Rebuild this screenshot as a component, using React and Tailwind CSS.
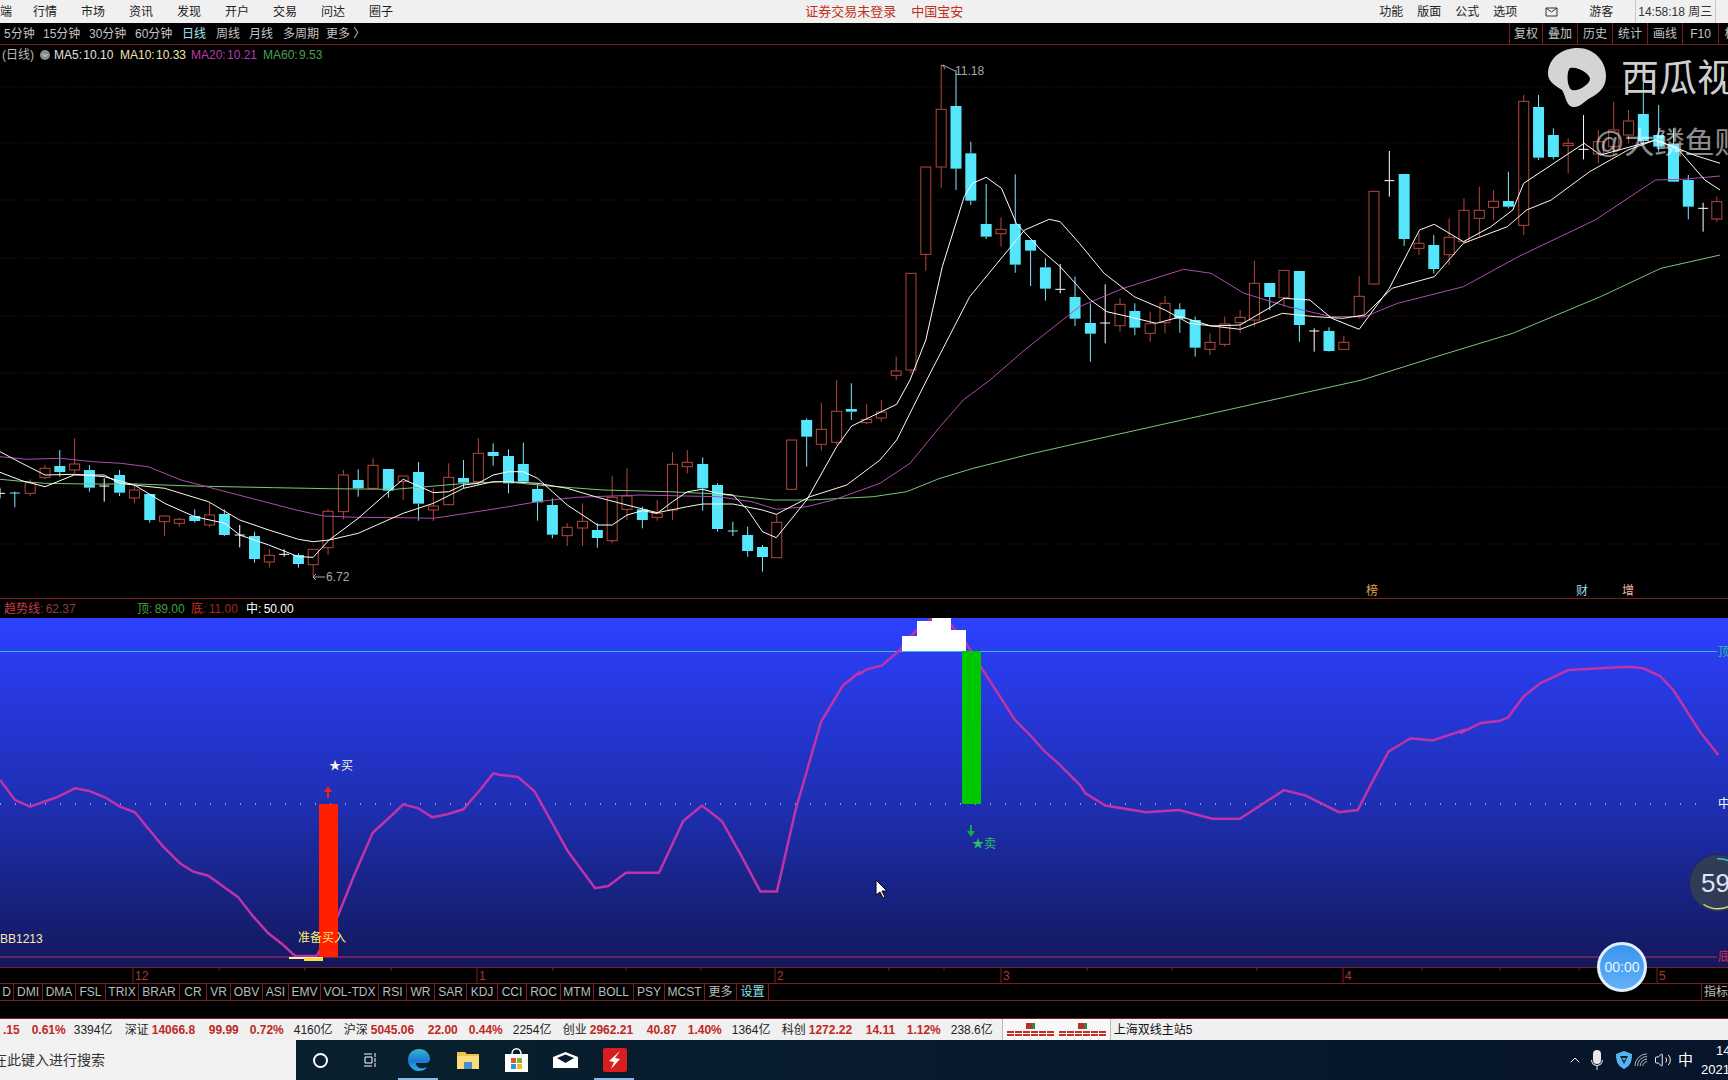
import React from 'react'
import { ChevronUp, Volume2 } from 'lucide-react'

// points were read off three different crops of the chart, each with its own scale
const z5 = ([x, y]) => [x / 1.823, 420 + y / 3]
const z6 = ([x, y]) => [860 + x / 1.823, 40 + y / 3]
const z10 = ([x, y]) => [700 + x / 3, 380 + y / 3]
const z7 = ([x, y]) => [x / 3, 590 + y / 3]
const z8 = ([x, y]) => [1500 + x / 3, 590 + y / 3]
const z9 = ([x, y]) => [860 + x / 3, 600 + y / 3]
const full = ([x, y]) => [x * 1.102, y * 1.102]
const toPoints = (pts) => pts.map(([x, y]) => `${x.toFixed(1)},${y.toFixed(1)}`).join(' ')

// [x, top, bottom, high, low, kind] r = hollow red, c = cyan, w = doji
const leftCandles = [
  [0, 220, 220, 205, 235, 'w'], [27, 219, 219, 215, 262, 'c'], [55, 188, 220, 178, 228, 'r'], [82, 145, 172, 135, 178, 'r'],
  [109, 138, 156, 90, 170, 'c'], [136, 132, 150, 55, 160, 'r'], [163, 150, 203, 135, 215, 'c'], [190, 198, 198, 175, 245, 'w'],
  [218, 165, 218, 150, 228, 'c'], [245, 210, 234, 195, 250, 'r'], [273, 222, 300, 222, 308, 'c'], [300, 288, 305, 288, 348, 'r'],
  [327, 298, 310, 293, 320, 'r'], [355, 288, 303, 268, 308, 'c'], [382, 285, 315, 245, 320, 'r'], [409, 282, 345, 268, 348, 'c'],
  [437, 345, 345, 315, 382, 'w'], [464, 348, 417, 335, 428, 'c'], [491, 406, 426, 388, 443, 'r'], [518, 403, 403, 388, 410, 'w'],
  [544, 405, 432, 400, 443, 'c'], [571, 388, 434, 388, 470, 'r'], [598, 274, 383, 268, 405, 'r'], [626, 165, 275, 150, 298, 'r'],
  [653, 180, 205, 148, 230, 'c'], [680, 136, 205, 115, 210, 'r'], [708, 147, 212, 147, 233, 'c'], [735, 168, 185, 168, 240, 'r'],
  [763, 156, 251, 126, 302, 'c'], [790, 258, 270, 205, 303, 'r'], [818, 172, 254, 130, 254, 'r'], [845, 174, 188, 120, 205, 'c'],
  [872, 100, 185, 55, 195, 'r'], [899, 96, 108, 70, 137, 'c'], [927, 108, 190, 88, 220, 'c'], [954, 132, 185, 68, 185, 'c'],
  [980, 207, 247, 190, 302, 'c'], [1007, 255, 344, 235, 355, 'c'], [1034, 322, 347, 310, 378, 'r'], [1062, 304, 324, 250, 378, 'r'],
  [1089, 330, 354, 310, 383, 'c'], [1116, 232, 362, 168, 370, 'r'], [1143, 228, 268, 145, 300, 'r'], [1171, 268, 300, 260, 325, 'c'],
  [1198, 280, 292, 240, 302, 'r'], [1226, 133, 270, 97, 300, 'r'], [1253, 127, 140, 90, 160, 'r'], [1281, 132, 205, 112, 272, 'c'],
  [1308, 195, 327, 190, 335, 'c'], [1336, 333, 333, 305, 348, 'c'], [1363, 345, 393, 320, 410, 'c'], [1390, 381, 411, 375, 455, 'c'],
  [1416, 307, 413, 283, 413, 'r'],
]
const midCandles = [
  [275, 180, 328, 180, 328, 'r'], [320, 120, 170, 115, 260, 'c'], [364, 148, 193, 68, 212, 'r'], [410, 94, 187, 0, 195, 'r'],
  [454, 87, 95, 10, 120, 'c'], [500, 118, 128, 72, 132, 'r'], [544, 96, 114, 60, 125, 'r'],
]
const rightCandles = [
  [66, 993, 1006, 950, 1020, 'r'], [93, 700, 990, 700, 1000, 'r'], [120, 381, 643, 381, 692, 'r'], [148, 208, 381, 75, 443, 'r'],
  [175, 198, 386, 90, 450, 'c'], [202, 340, 482, 305, 495, 'c'], [230, 552, 590, 432, 597, 'c'], [257, 568, 581, 532, 620, 'r'],
  [283, 552, 674, 403, 698, 'c'], [311, 600, 632, 600, 738, 'c'], [338, 682, 746, 655, 782, 'c'], [365, 748, 748, 672, 760, 'w'],
  [392, 771, 836, 710, 858, 'c'], [420, 849, 881, 790, 965, 'c'], [447, 849, 849, 733, 910, 'w'], [474, 793, 857, 775, 875, 'r'],
  [501, 813, 863, 790, 885, 'c'], [529, 851, 880, 815, 905, 'r'], [556, 790, 848, 768, 880, 'r'], [583, 808, 836, 790, 878, 'c'],
  [611, 840, 923, 830, 950, 'c'], [638, 907, 928, 880, 945, 'r'], [665, 852, 913, 830, 920, 'r'], [693, 832, 848, 810, 880, 'r'],
  [719, 730, 840, 663, 860, 'r'], [747, 729, 771, 729, 810, 'c'], [773, 691, 773, 691, 800, 'r'], [801, 693, 855, 693, 905, 'c'],
  [828, 873, 873, 865, 935, 'w'], [855, 873, 933, 862, 935, 'c'], [882, 907, 928, 888, 930, 'r'], [910, 769, 830, 708, 835, 'r'],
  [937, 454, 732, 454, 735, 'r'], [965, 422, 422, 333, 470, 'w'], [992, 402, 597, 402, 618, 'c'], [1019, 610, 625, 580, 645, 'r'],
  [1046, 615, 687, 585, 700, 'c'], [1074, 592, 644, 535, 675, 'r'], [1101, 511, 605, 475, 610, 'r'], [1129, 511, 535, 440, 590, 'r'],
  [1155, 484, 502, 450, 540, 'r'], [1182, 483, 500, 395, 505, 'c'], [1210, 184, 556, 165, 585, 'r'], [1237, 201, 353, 165, 360, 'c'],
  [1264, 285, 351, 265, 358, 'c'], [1291, 310, 317, 295, 400, 'r'], [1319, 328, 328, 225, 358, 'w'], [1346, 305, 342, 270, 370, 'r'],
  [1374, 270, 320, 185, 345, 'r'], [1401, 243, 285, 210, 310, 'r'], [1428, 222, 303, 100, 310, 'c'], [1456, 285, 320, 195, 335, 'c'],
  [1483, 313, 425, 265, 425, 'c'], [1510, 420, 500, 405, 538, 'c'], [1537, 505, 505, 488, 575, 'w'], [1562, 485, 537, 470, 545, 'r'],
]

const candles = [
  ...leftCandles.map(([x, t, b, h, l, k]) => ({ x: z5([x, 0])[0], t: z5([0, t])[1], b: z5([0, b])[1], h: z5([0, h])[1], l: z5([0, l])[1], k })),
  ...midCandles.map(([x, t, b, h, l, k]) => ({ x: z10([x, 0])[0], t: z10([0, t])[1], b: z10([0, b])[1], h: z10([0, h])[1], l: z10([0, l])[1], k })),
  ...rightCandles.map(([x, t, b, h, l, k]) => ({ x: z6([x, 0])[0], t: z6([0, t])[1], b: z6([0, b])[1], h: z6([0, h])[1], l: z6([0, l])[1], k })),
]

const ma5 = [
  ...[[0, 157], [40, 182], [82, 200], [135, 165], [190, 165], [218, 190], [245, 195], [300, 250], [355, 290], [410, 310], [437, 345], [490, 375], [544, 410], [571, 412], [600, 360], [653, 295], [708, 215], [735, 178], [790, 218], [818, 215], [845, 195], [872, 190], [899, 165], [927, 155], [954, 155], [980, 175], [1007, 215], [1034, 255], [1062, 285], [1089, 315], [1116, 315], [1143, 285], [1171, 272], [1198, 280], [1226, 245], [1253, 215], [1281, 208], [1308, 220], [1336, 225], [1363, 270], [1390, 335]].map(z5),
  ...[[229, 473], [320, 360], [410, 200], [455, 138], [590, 73], [630, 0]].map(z10),
  ...[[120, 900], [150, 680], [190, 470], [205, 430], [230, 412], [258, 445], [285, 550], [330, 630], [365, 680], [420, 780], [450, 815], [490, 830], [540, 850], [585, 830], [640, 858], [693, 855], [750, 800], [773, 775], [820, 780], [860, 835], [910, 868], [965, 745], [1020, 570], [1047, 553], [1100, 605], [1150, 560], [1190, 510], [1210, 430], [1320, 310], [1350, 345], [1450, 300], [1490, 325], [1540, 420], [1568, 450]].map(z6),
]
const ma10 = [
  ...[[0, 95], [40, 130], [82, 165], [136, 163], [190, 170], [245, 195], [300, 205], [380, 245], [437, 300], [490, 330], [544, 358], [571, 365], [600, 360], [653, 340], [680, 320], [735, 280], [790, 250], [845, 205], [899, 185], [927, 185], [980, 190], [1034, 205], [1089, 232], [1143, 255], [1198, 278], [1253, 260], [1281, 252], [1336, 252], [1390, 270]].map(z5),
  ...[[229, 403], [330, 350], [440, 315], [540, 240], [590, 180], [640, 80], [680, 0]].map(z10),
  ...[[200, 770], [300, 570], [345, 538], [365, 545], [400, 610], [445, 700], [500, 770], [556, 810], [600, 850], [693, 868], [770, 820], [830, 830], [880, 835], [920, 825], [970, 745], [1047, 710], [1100, 610], [1180, 560], [1215, 510], [1260, 480], [1330, 395], [1400, 330], [1450, 300], [1490, 325], [1520, 345], [1568, 370]].map(z6),
]
const ma20 = [
  ...[[0, 110], [50, 118], [110, 115], [170, 125], [220, 130], [270, 140], [330, 180], [400, 210], [470, 240], [540, 270], [590, 288], [650, 292], [735, 293], [790, 295], [850, 280], [920, 262], [980, 245], [1050, 232], [1115, 228], [1170, 225], [1250, 228], [1310, 230], [1370, 245]].map(z5),
  ...[[230, 388], [320, 380], [400, 360], [540, 310], [630, 250], [720, 140], [790, 60], [870, 0]].map(z10),
  ...[[300, 930], [400, 800], [480, 745], [590, 688], [640, 700], [700, 760], [780, 800], [860, 830], [920, 830], [980, 790], [1100, 740], [1200, 650], [1340, 540], [1450, 420], [1500, 418], [1568, 408]].map(z6),
]
const ma60 = [
  ...[[0, 178], [80, 190], [160, 192], [250, 192], [350, 198], [500, 203], [600, 206], [720, 208], [850, 190], [920, 185], [1000, 198], [1100, 210], [1220, 215], [1310, 222]].map(z5),
  ...[[220, 360], [330, 360], [520, 350], [620, 335], [720, 295], [820, 265], [1000, 220], [1200, 175]].map(z10),
  ...[[915, 1020], [1050, 950], [1190, 880], [1350, 770], [1460, 685], [1568, 645]].map(z6),
]

const trend = [
  ...[[0, 570], [45, 630], [90, 650], [170, 622], [225, 595], [265, 602], [315, 622], [360, 650], [405, 667], [440, 710], [490, 770], [540, 820], [580, 845], [625, 857], [715, 922], [760, 980], [805, 1030], [850, 1065], [885, 1098], [950, 1098], [1015, 975], [1065, 850], [1118, 728], [1160, 690], [1210, 643], [1255, 655], [1297, 682], [1345, 672], [1390, 658], [1440, 600], [1480, 550]].map(z7),
  ...[[453, 703], [470, 705], [485, 718], [515, 772], [540, 806], [552, 804], [568, 792], [598, 792], [620, 745], [637, 731], [655, 745], [672, 775], [690, 809], [705, 809], [722, 735], [745, 655], [765, 622], [780, 610]].map(full),
  ...[[0, 222], [20, 208], [65, 197], [120, 150], [165, 95], [215, 55], [250, 55], [273, 75], [318, 130], [362, 200], [465, 360], [510, 405], [555, 455], [595, 490], [660, 555]].map(z9),
  ...[[985, 720], [1003, 731], [1040, 737], [1070, 735], [1100, 743], [1125, 743], [1145, 730], [1165, 717], [1185, 722], [1215, 737], [1232, 735], [1245, 710], [1260, 682], [1280, 670], [1300, 672], [1330, 662]].map(full),
  ...[[-120, 430], [-60, 400], [0, 392], [25, 382], [70, 320], [120, 280], [205, 240], [300, 235], [385, 230], [430, 235], [480, 258], [520, 300], [600, 425], [655, 495]].map(z8),
]

const menuLeft = ['行情', '市场', '资讯', '发现', '开户', '交易', '问达', '圈子']
const periods = [
  ['5分钟', 'w-[43px] pl-[4px]'], ['15分钟', 'w-[46px]'], ['30分钟', 'w-[46px]'], ['60分钟', 'w-[47px]'],
  ['日线', 'w-[34px] text-[#a8e4f0]'], ['周线', 'w-[33px]'], ['月线', 'w-[34px]'], ['多周期', 'w-[43px]'], ['更多 〉', 'w-[44px]'],
]
const tools = [
  ['复权', 'w-[33px]'], ['叠加', 'w-[35px]'], ['历史', 'w-[35px]'], ['统计', 'w-[35px]'],
  ['画线', 'w-[35px]'], ['F10', 'w-[36px]'], ['板块', 'w-[36px]'],
]
const tabs = [
  ['D', 'w-[14px]'], ['DMI', 'w-[29px]'], ['DMA', 'w-[33px]'], ['FSL', 'w-[30px]'], ['TRIX', 'w-[33px]'], ['BRAR', 'w-[41px]'],
  ['CR', 'w-[27px]'], ['VR', 'w-[24px]'], ['OBV', 'w-[32px]'], ['ASI', 'w-[26px]'], ['EMV', 'w-[32px]'], ['VOL-TDX', 'w-[58px]'],
  ['RSI', 'w-[28px]'], ['WR', 'w-[28px]'], ['SAR', 'w-[32px]'], ['KDJ', 'w-[31px]'], ['CCI', 'w-[29px]'], ['ROC', 'w-[34px]'],
  ['MTM', 'w-[33px]'], ['BOLL', 'w-[40px]'], ['PSY', 'w-[31px]'], ['MCST', 'w-[40px]'], ['更多', 'w-[32px]'], ['设置', 'w-[32px] text-[#8fe0ec]'],
]
const indexes = [
  { name: '深证', price: '14066.8', diff: '99.99', pct: '0.72%', vol: '4160亿' },
  { name: '沪深', price: '5045.06', diff: '22.00', pct: '0.44%', vol: '2254亿' },
  { name: '创业', price: '2962.21', diff: '40.87', pct: '1.40%', vol: '1364亿' },
  { name: '科创', price: '1272.22', diff: '14.11', pct: '1.12%', vol: '238.6亿' },
]
const gridLines = [87, 143, 200, 258, 316, 373, 429, 487, 544]
const axisTicks = [219, 305, 391, 553, 626, 701, 889, 944, 1087, 1172, 1257, 1422, 1500, 1579]
const axisLabels = [['12', 133], ['1', 477], ['2', 775], ['3', 1001], ['4', 1343], ['5', 1657]]

const Candle = ({ c }) => {
  const color = c.k === 'r' ? '#b4483e' : c.k === 'c' ? '#55e6fc' : '#ffffff'
  const wick = c.k === 'c' ? '#7fe9fa' : color
  if (c.k === 'w' || c.t === c.b) {
    return (
      <g stroke={wick}>
        <line x1={c.x} x2={c.x} y1={c.h} y2={c.l} />
        <line x1={c.x - 5} x2={c.x + 5} y1={c.t} y2={c.t} />
      </g>
    )
  }
  return (
    <g>
      <line x1={c.x} x2={c.x} y1={c.h} y2={c.t} stroke={wick} />
      <line x1={c.x} x2={c.x} y1={c.b} y2={c.l} stroke={wick} />
      {c.k === 'r' ? (
        <rect x={c.x - 5} y={c.t} width="10" height={c.b - c.t} fill="#000" stroke={color} />
      ) : (
        <rect x={c.x - 5.5} y={c.t} width="11" height={c.b - c.t} fill={color} />
      )}
    </g>
  )
}

const PriceChart = () => (
  <svg viewBox="0 45 1728 553" className="block w-full h-full">
    {gridLines.map((y) => (
      <line key={y} x1="0" x2="1728" y1={y} y2={y} stroke="#451212" strokeDasharray="1 2" />
    ))}
    {candles.map((c, i) => (
      <Candle key={i} c={c} />
    ))}
    <polyline points={toPoints(ma60)} fill="none" stroke="#79c77a" />
    <polyline points={toPoints(ma20)} fill="none" stroke="#b04bb0" />
    <polyline points={toPoints(ma10)} fill="none" stroke="#fbf8e0" />
    <polyline points={toPoints(ma5)} fill="none" stroke="#ffffff" />
    <path d="M941 66l2-1 12 6M943 65l2 4" fill="none" stroke="#aaaaaa" />
    <text x="955" y="75" fontSize="12" fill="#a8a8a8">11.18</text>
    <path d="M325 577h-12l3-3M313 577l3 3" fill="none" stroke="#aaaaaa" />
    <text x="326" y="581" fontSize="12" fill="#a8a8a8">6.72</text>
    <text x="1366" y="595" fontSize="12" fill="#e0a050">榜</text>
    <text x="1576" y="595" fontSize="12" fill="#9fd8f5">财</text>
    <text x="1622" y="595" fontSize="12" fill="#f0b0a0">增</text>
  </svg>
)

const TrendChart = () => (
  <svg viewBox="0 618 1728 349" className="block w-full h-full">
    <line x1="0" x2="1717" y1="651.5" y2="651.5" stroke="#30c0d8" />
    <line x1="0" x2="1717" y1="957" y2="957" stroke="#b8305e" />
    <line x1="0" x2="1705" y1="804" y2="804" stroke="#ffffff" strokeDasharray="1 14" />
    <polyline points={toPoints(trend)} fill="none" stroke="#c033a8" strokeWidth="2.5" />
    <rect x="902" y="636" width="64" height="15" fill="#ffffff" />
    <rect x="917" y="621" width="34" height="15" fill="#ffffff" />
    <rect x="951" y="630" width="15" height="6" fill="#ffffff" />
    <rect x="932" y="618" width="19" height="3" fill="#ffffff" />
    <rect x="962" y="651" width="19" height="153" fill="#00c800" />
    <rect x="319" y="804" width="19" height="153" fill="#ff2000" />
    <rect x="289" y="957" width="34" height="2" fill="#fff2a0" />
    <rect x="304" y="958" width="19" height="3" fill="#ffdc3c" />
    <path d="M328 786l4 6h-3v6h-2v-6h-3z" fill="#f02020" />
    <path d="M971 837l4-6h-3v-6h-2v6h-3z" fill="#0fae3c" />
    <text x="329" y="770" fontSize="12" fill="#f2f2e0">★买</text>
    <text x="972" y="848" fontSize="12" fill="#25c060">★卖</text>
    <text x="298" y="942" fontSize="12" fill="#ffec70">准备买入</text>
    <text x="0" y="943" fontSize="12" fill="#f5eeb0">BB1213</text>
    <text x="1718" y="656" fontSize="12" fill="#20c090">顶</text>
    <text x="1718" y="808" fontSize="12" fill="#ffffff">中</text>
    <text x="1718" y="961" fontSize="12" fill="#d03040">底</text>
  </svg>
)

const TimeAxis = () => (
  <svg viewBox="0 968 1728 15" className="block w-full h-full">
    {axisTicks.map((x) => (
      <line key={x} x1={x} x2={x} y1="968" y2="971" stroke="#7a2020" />
    ))}
    {axisLabels.map(([label, x]) => (
      <g key={label}>
        <line x1={x} x2={x} y1="968" y2="983" stroke="#7a2020" />
        <text x={x + 2} y="980" fontSize="12" fill="#a83a30">{label}</text>
      </g>
    ))}
  </svg>
)

const XiguaLogo = () => (
  <svg viewBox="0 0 58 59" className="w-[58px] h-[59px]">
    <path d="M30 0C46 0 58 13 58 28C58 40 50 46 42 50C36 54 32 59 26 59C18 59 18 48 14 42C8 38 0 34 0 26C0 10 14 0 30 0Z" fill="#d4d4d4" />
    <path d="M22 20C30 18 42 26 42 31C42 36 30 44 24 42C19 40 18 24 22 20Z" fill="#000000" />
  </svg>
)

const Gauge = () => (
  <div className="absolute left-[1689px] top-[854px] w-[58px] h-[58px] rounded-full bg-[#303b58] border border-[#1d2a55] flex items-center pl-[11px] text-[26px] text-[#dfe6f2]">
    <svg viewBox="0 0 58 58" className="absolute inset-0">
      <path d="M28 4A26 26 0 0 1 54 20" fill="none" stroke="#39c8d8" strokeWidth="1.5" />
      <path d="M14 51A26 26 0 0 0 44 51" fill="none" stroke="#d8d88a" strokeWidth="1.5" />
    </svg>
    59
  </div>
)

const TimerButton = () => (
  <div className="absolute left-[1597px] top-[942px] w-[50px] h-[50px] rounded-full border-[3px] border-[#e2f0fb] bg-gradient-to-b from-[#3a94ee] to-[#62b0f8] flex items-center justify-center text-[14px] text-[#e8f6ff]">
    00:00
  </div>
)

const Cursor = () => (
  <svg viewBox="0 0 13 20" className="absolute left-[875px] top-[879px] w-[13px] h-[20px]">
    <path d="M1 1v15l4-3 3 6 2-1-3-6h5z" fill="#ffffff" stroke="#000000" />
  </svg>
)

const StatusDashes = () => (
  <div className="flex flex-col items-center w-[48px]">
    <div className="flex h-[6px] mb-[1px]">
      <span className="w-[6px] bg-[#b83028]" />
      <span className="w-[3px] bg-[#2c8c3c]" />
    </div>
    <div className="flex gap-[1px] mt-[1px]">
      {[0, 1, 2, 3, 4, 5].map((i) => (
        <span key={i} className="w-[7px] h-[5px] bg-[repeating-linear-gradient(#c03028_0_2px,transparent_2px_3px)]" />
      ))}
    </div>
  </div>
)

const StatusBar = () => (
  <div className="h-[22px] border-t border-[#7a1c20] bg-[#f0f0f0] flex items-center text-[12px] whitespace-nowrap">
    <span className="ml-[3px] font-bold text-[#c0281e]">.15</span>
    <span className="ml-[12px] font-bold text-[#c0281e]">0.61%</span>
    <span className="ml-[8px] w-[37px] text-[#222222]">3394亿</span>
    {indexes.map((item) => (
      <div key={item.name} className="flex items-center ml-[14px]">
        <span className="w-[24px] text-[#222222]">{item.name}</span>
        <span className="ml-[3px] w-[46px] font-bold text-[#c0281e]">{item.price}</span>
        <span className="ml-[11px] w-[32px] font-bold text-[#c0281e]">{item.diff}</span>
        <span className="ml-[9px] w-[36px] font-bold text-[#c0281e]">{item.pct}</span>
        <span className="ml-[8px] w-[36px] text-[#222222]">{item.vol}</span>
      </div>
    ))}
    <div className="ml-[15px] h-full w-[109px] border-x border-[#bbbbbb] bg-[#f8f8f8] flex items-center justify-center gap-[4px]">
      <StatusDashes />
      <StatusDashes />
    </div>
    <span className="ml-[3px] text-[#111111]">上海双线主站5</span>
  </div>
)

const TaskSlot = ({ active, children }) => (
  <div className="relative w-[49px] h-full flex items-center justify-center shrink-0">
    {children}
    {active && <span className="absolute bottom-0 left-[4px] w-[40px] h-[2px] bg-[#8ab8e0]" />}
  </div>
)

const EdgeIcon = () => (
  <svg viewBox="0 0 24 24" className="w-[24px] h-[24px]">
    <defs>
      <linearGradient id="edgeFill" x1="0" y1="0" x2="0" y2="1">
        <stop offset="0" stopColor="#2fb8c8" />
        <stop offset="0.55" stopColor="#1e78d8" />
        <stop offset="1" stopColor="#22b6e8" />
      </linearGradient>
    </defs>
    <path d="M1 12C1 5 6 1 12 1c7 0 11 5 11 10 0 3-2 4-5 4H9c0 4 4 6 8 5 1 0 2-1 3-1-2 3-5 4-8 4C6 23 1 18 1 12z" fill="url(#edgeFill)" />
  </svg>
)

const Taskbar = () => (
  <div className="h-[40px] flex bg-gradient-to-r from-[#08222f] to-[#07152a] text-white">
    <div className="w-[296px] shrink-0 h-full bg-[#f2f2f2] flex items-center overflow-hidden text-[14px] text-[#333333] whitespace-nowrap">
      <span className="-ml-[7px]">在此键入进行搜索</span>
    </div>
    <TaskSlot>
      <span className="w-[15px] h-[15px] rounded-full border-2 border-white" />
    </TaskSlot>
    <TaskSlot>
      <svg viewBox="0 0 16 16" className="w-[16px] h-[16px]" fill="none" stroke="#ffffff">
        <path d="M2 2h8M2 14h8M3 5h7v6H3zM13 1v4M13 6v4M13 11v4" />
      </svg>
    </TaskSlot>
    <TaskSlot active>
      <EdgeIcon />
    </TaskSlot>
    <TaskSlot>
      <svg viewBox="0 0 22 18" className="w-[22px] h-[18px]">
        <path d="M0 1h8l2 2h12v14H0z" fill="#f0c050" />
        <rect x="0" y="5" width="22" height="13" fill="#fbdc7c" />
        <rect x="7" y="11" width="8" height="7" fill="#4a90c8" />
      </svg>
    </TaskSlot>
    <TaskSlot>
      <svg viewBox="0 0 23 24" className="w-[23px] h-[24px]">
        <path d="M0 6h23v18H0z" fill="#ffffff" />
        <path d="M7 6c0-7 9-7 9 0" fill="none" stroke="#ffffff" strokeWidth="1.5" />
        <rect x="6" y="10" width="5" height="5" fill="#e85028" />
        <rect x="12" y="10" width="5" height="5" fill="#74b82c" />
        <rect x="6" y="16" width="5" height="5" fill="#1e9ce8" />
        <rect x="12" y="16" width="5" height="5" fill="#f8b818" />
      </svg>
    </TaskSlot>
    <TaskSlot>
      <svg viewBox="0 0 25 16" className="w-[25px] h-[16px]">
        <path d="M0 5L12.5 0L25 5V16H0z" fill="#ffffff" />
        <path d="M4 6L12.5 2.500L21 6L12.5 11z" fill="#0a1c2c" />
      </svg>
    </TaskSlot>
    <TaskSlot active>
      <svg viewBox="0 0 24 24" className="w-[24px] h-[24px]">
        <rect width="24" height="24" rx="2" fill="#d81e1e" />
        <path d="M17 3L6 13l5 1-3 7 9-10-5-1z" fill="#ffffff" />
      </svg>
    </TaskSlot>
    <div className="ml-auto flex items-center h-full relative w-[170px] overflow-hidden">
      <ChevronUp className="absolute left-[9px] top-[12px] w-[16px] h-[16px]" strokeWidth={1.5} />
      <svg viewBox="0 0 12 20" className="absolute left-[33px] top-[10px] w-[12px] h-[20px]" fill="#e8e8e8">
        <rect x="2" y="0" width="8" height="14" rx="4" />
        <path d="M0 10a6 6 0 0 0 12 0h-1a5 5 0 0 1-10 0zM5.500 16h1v4h-1z" />
      </svg>
      <svg viewBox="0 0 16 18" className="absolute left-[58px] top-[11px] w-[16px] h-[18px]">
        <path d="M8 0l8 3c0 8-2 12-8 15C2 15 0 11 0 3z" fill="#58b4f0" />
        <path d="M4 5h8l-4 8z" fill="#0a2030" />
        <path d="M6 7h4l-2 3z" fill="#58b4f0" />
      </svg>
      <svg viewBox="0 0 16 16" className="absolute left-[76px] top-[13px] w-[14px] h-[14px]" fill="none" stroke="#c8c8c8">
        <path d="M1 15A14 14 0 0 1 15 1M4 15A11 11 0 0 1 15 4M7 15A8 8 0 0 1 15 7M10 15A5 5 0 0 1 15 10" />
      </svg>
      <Volume2 className="absolute left-[96px] top-[11px] w-[18px] h-[18px]" strokeWidth={1.25} />
      <span className="absolute left-[120px] top-[11px] text-[15px] leading-[18px]">中</span>
      <span className="absolute left-[158px] top-[3px] text-[13px] leading-[16px]">14:58</span>
      <span className="absolute left-[143px] top-[22px] text-[13px] leading-[16px]">2021/1/13</span>
    </div>
  </div>
)

const App = () => {
  return (
    <div className="relative w-[1728px] h-[1080px] overflow-hidden bg-black [font-family:'Liberation_Sans','Noto_Sans_CJK_SC',sans-serif]">
      <div className="h-[23px] bg-[#f0f0f0] flex items-center text-[12px] text-[#222222] whitespace-nowrap">
        <span className="w-[12px]">端</span>
        <div className="ml-[21px] flex gap-[24px]">
          {menuLeft.map((m) => (
            <span key={m}>{m}</span>
          ))}
        </div>
        <span className="ml-[412px] text-[13px] text-[#c03020]">证券交易未登录</span>
        <span className="ml-[15px] text-[13px] text-[#c03020]">中国宝安</span>
        <div className="ml-[416px] flex gap-[14px]">
          <span>功能</span>
          <span>版面</span>
          <span>公式</span>
          <span>选项</span>
        </div>
        <svg viewBox="0 0 13 10" className="ml-[28px] w-[13px] h-[10px]" fill="none" stroke="#333333">
          <path d="M1 1h11v8H1zM1 1l5.500 4L12 1" />
        </svg>
        <span className="ml-[31px]">游客</span>
        <div className="ml-[22px] h-full w-[81px] border-x border-[#c8c8c8] flex items-center pl-[2px] text-[#333333]">14:58:18 周三</div>
      </div>

      <div className="h-[22px] border-b border-[#7a1c20] flex items-center text-[12px] text-[#c4c4c4] whitespace-nowrap">
        {periods.map(([label, cls]) => (
          <span key={label} className={cls}>{label}</span>
        ))}
        <div className="ml-auto mr-[-26px] flex h-full">
          {tools.map(([label, cls]) => (
            <span key={label} className={`${cls} border-l border-[#7a1c20] flex items-center justify-center overflow-hidden`}>{label}</span>
          ))}
        </div>
      </div>

      <div className="relative h-[553px]">
        <PriceChart />
        <div className="absolute left-[2px] top-[1px] flex items-center text-[12px] [word-spacing:-2px] whitespace-nowrap">
          <span className="w-[36px] text-[#b8b8b8]">(日线)</span>
          <span className="ml-[2px] w-[10px] h-[10px] rounded-full bg-[#8c8c8c] flex items-center justify-center">
            <svg viewBox="0 0 8 8" className="w-[8px] h-[8px]" fill="none" stroke="#e0e0e0">
              <path d="M1.500 3L4 5.500L6.500 3" />
            </svg>
          </span>
          <span className="ml-[4px] w-[66px] text-[#e0e0e0]">MA5: 10.10</span>
          <span className="w-[71px] text-[#efe4b0]">MA10: 10.33</span>
          <span className="w-[72px] text-[#b83cae]">MA20: 10.21</span>
          <span className="text-[#46a055]">MA60: 9.53</span>
        </div>
      </div>

      <div className="h-[20px] border-t border-[#7a1c20] flex items-center text-[12px] [word-spacing:-1px] whitespace-nowrap">
        <span className="ml-[4px] w-[133px] text-[#c83c48]">趋势线<span className="text-[#8e3c44]">: 62.37</span></span>
        <span className="w-[54px] text-[#3fa040]">顶: 89.00</span>
        <span className="w-[55px] text-[#cc3322]">底<span className="text-[#a02818]">: 11.00</span></span>
        <span className="text-white">中: 50.00</span>
      </div>

      <div className="h-[349px] bg-gradient-to-b from-[#2d40ff] via-[#1e2eb0] via-55% to-[#13185c]">
        <TrendChart />
      </div>

      <div className="h-[16px] border-t border-[#7a1c20]">
        <TimeAxis />
      </div>

      <div className="h-[17px] border-t border-[#7a1c20] flex text-[12px] leading-[16px] text-[#bcbcbc] whitespace-nowrap">
        {tabs.map(([label, cls]) => (
          <span key={label} className={`${cls} shrink-0 border-r border-[#7a1c20] flex justify-center overflow-hidden`}>{label}</span>
        ))}
        <span className="ml-auto w-[27px] pl-[2px] border-l border-[#7a1c20] overflow-hidden">指标</span>
      </div>

      <div className="h-[18px] border-t border-[#7a1c20]" />

      <StatusBar />
      <Taskbar />

      <div className="absolute left-[1548px] top-[48px]">
        <XiguaLogo />
      </div>
      <div className="absolute left-[1621px] top-[54px] w-[107px] overflow-hidden whitespace-nowrap text-[38px] leading-[48px] text-[#cfcfcf]">西瓜视频</div>
      <div className="absolute left-[1594px] top-[124px] w-[134px] overflow-hidden whitespace-nowrap text-[30px] leading-[38px] text-white/55">@大鳞鱼财</div>

      <Gauge />
      <TimerButton />
      <Cursor />
    </div>
  )
}

export default App
